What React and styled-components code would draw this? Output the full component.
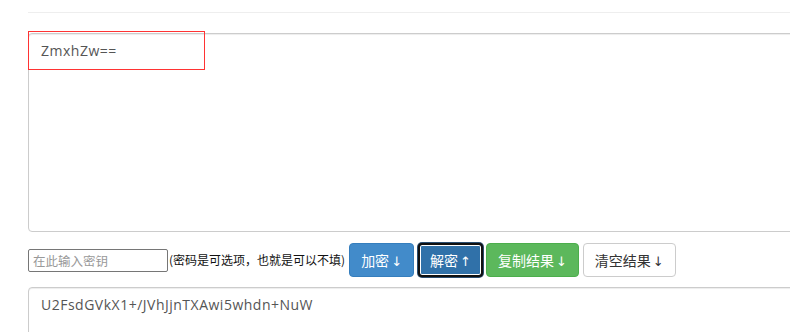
import React from "react";
import styled, { createGlobalStyle, css } from "styled-components";

const Global = createGlobalStyle`
  html, body { margin: 0; padding: 0; background: #fff; overflow: hidden; }
  body {
    font-family: "Open Sans", "Noto Sans CJK SC", sans-serif;
    font-size: 14px;
    line-height: 1.42857;
    color: #333;
  }
  * { box-sizing: border-box; }
`;

const Page = styled.div`
  width: 1100px;
  padding: 12px 0 0 28px;
`;

const Rule = styled.div`
  height: 1px;
  background: #eee;
  margin-bottom: 20px;
`;

const Field = styled.div`
  position: relative;
`;

const TextBox = styled.textarea`
  display: block;
  width: 100%;
  height: ${(p) => p.$h}px;
  padding: 7px 12px 5px;
  border: 1px solid #ccc;
  border-radius: 4px;
  box-shadow: inset 0 1px 1px rgba(0, 0, 0, 0.075);
  font-family: "Open Sans", "Noto Sans CJK SC", sans-serif;
  font-size: 14px;
  line-height: 20px;
  letter-spacing: 0.5px;
  color: #555;
  resize: none;
  outline: none;
  background: #fff;
`;

const Highlight = styled.div`
  position: absolute;
  left: 0;
  top: -2px;
  width: 177px;
  height: 39px;
  border: 1px solid #f33;
  pointer-events: none;
`;

const Toolbar = styled.div`
  display: flex;
  align-items: center;
  margin: 11px 0 10px;
`;

const KeyInput = styled.input`
  width: 140px;
  height: 23px;
  padding: 1px 4px;
  border: 1px solid #767676;
  border-radius: 2px;
  font-family: "Noto Sans CJK SC", sans-serif;
  font-size: 12.5px;
  color: #333;
  &::placeholder { color: #999; }
`;

const Hint = styled.span`
  font-family: "Noto Sans CJK SC", sans-serif;
  font-size: 12px;
  color: #111;
  margin: 0 4px 0 1px;
  white-space: nowrap;
`;

const variants = {
  primary: css`background: #428bca; border-color: #357ebd; color: #fff;`,
  success: css`background: #5cb85c; border-color: #4cae4c; color: #fff;`,
  default: css`background: #fff; border-color: #ccc; color: #333;`,
  focused: css`
    background: #3071a9;
    border: 2px solid #101010;
    padding: 5px 10px;
    color: #fff;
    box-shadow: inset 0 0 0 1px #fff, 0 0 0 1px #2a4d70;
  `,
};

const Btn = styled.button`
  height: 34px;
  padding: 6px 11px;
  margin-right: ${(p) => (p.$variant === "focused" ? 3 : 4)}px;
  border: 1px solid transparent;
  border-radius: 4px;
  font-family: "Noto Sans CJK SC", sans-serif;
  font-size: 14px;
  line-height: 20px;
  white-space: nowrap;
  cursor: pointer;
  ${(p) => variants[p.$variant]}
`;

const Arrow = styled.span`
  margin-left: 2px;
  font-family: "DejaVu Sans", sans-serif;
  font-size: 13px;
`;

export default function App() {
  return (
    <>
      <Global />
      <Page>
        <Rule />
        <Field>
          <TextBox $h={199} defaultValue="ZmxhZw==" />
          <Highlight />
        </Field>
        <Toolbar>
          <KeyInput placeholder="在此输入密钥" />
          <Hint>(密码是可选项，也就是可以不填)</Hint>
          <Btn $variant="primary">加密<Arrow>↓</Arrow></Btn>
          <Btn $variant="focused">解密<Arrow>↑</Arrow></Btn>
          <Btn $variant="success">复制结果<Arrow>↓</Arrow></Btn>
          <Btn $variant="default">清空结果<Arrow>↓</Arrow></Btn>
        </Toolbar>
        <Field>
          <TextBox $h={120} defaultValue="U2FsdGVkX1+/JVhJjnTXAwi5whdn+NuW" />
        </Field>
      </Page>
    </>
  );
}
